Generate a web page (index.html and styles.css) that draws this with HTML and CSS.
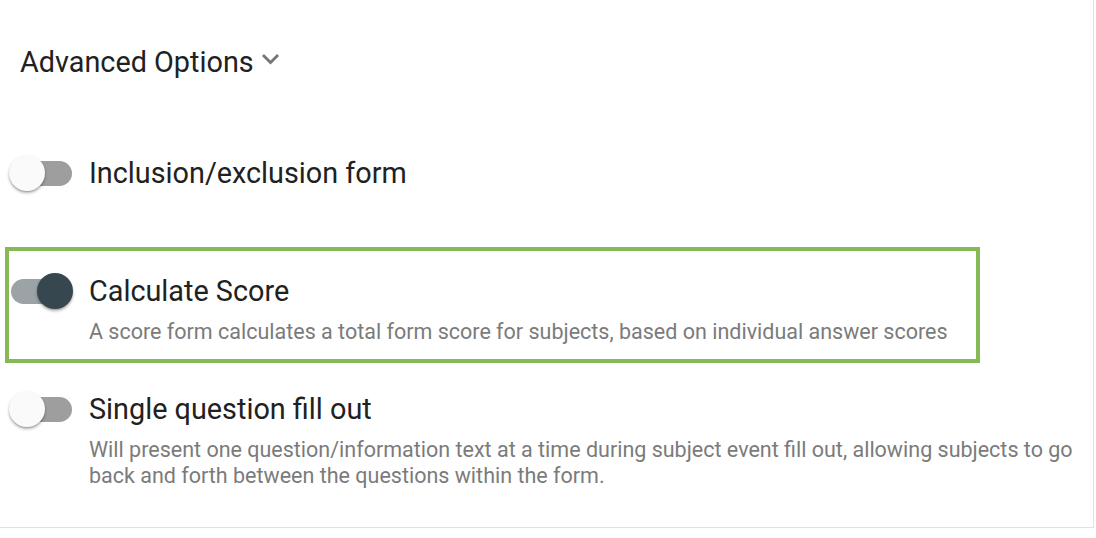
FILE: index.html
```html
<!DOCTYPE html>
<html>

<head>
  <title>Advanced Options</title>
  <link rel="stylesheet" href="styles.css">
</head>

<body>
  <div class="panel">
    <h3 class="panel-title">
      Advanced Options
      <svg class="chevron" viewBox="6 8.59 12 7.41" width="17" height="10.5">
        <path d="M16.59 8.59L12 13.17 7.41 8.59 6 10l6 6 6-6z" fill="#757575"/>
      </svg>
    </h3>

    <div class="option option-first">
      <span class="switch">
        <span class="switch-track"></span>
        <span class="switch-thumb"></span>
      </span>
      <div class="option-text">
        <div class="option-title">Inclusion/exclusion form</div>
      </div>
    </div>

    <div class="option option-highlight">
      <span class="switch switch-on">
        <span class="switch-track"></span>
        <span class="switch-thumb"></span>
      </span>
      <div class="option-text">
        <div class="option-title">Calculate Score</div>
        <div class="option-desc">A score form calculates a total form score for subjects, based on individual answer scores</div>
      </div>
    </div>

    <div class="option option-last">
      <span class="switch">
        <span class="switch-track"></span>
        <span class="switch-thumb"></span>
      </span>
      <div class="option-text">
        <div class="option-title">Single question fill out</div>
        <div class="option-desc">Will present one question/information text at a time during subject event fill out, allowing subjects to go back and forth between the questions within the form.</div>
      </div>
    </div>
  </div>
</body>

</html>
```

FILE: styles.css
```css
body {
  margin: 0;
  background-color: #ffffff;
  font-family: Roboto, "Noto Sans", sans-serif;
}

.panel {
  width: 1093px;
  height: 527px;
  border-right: 1px solid #e0e0e0;
  border-bottom: 1px solid #e0e0e0;
  overflow: hidden;
}

.panel-title {
  display: flex;
  align-items: center;
  gap: 8px;
  margin: 0;
  padding: 44px 0 0 20px;
  font-size: 28.8px;
  line-height: 36px;
  font-weight: 400;
  color: #212121;
}

.chevron {
  margin-top: -5px;
}

.option {
  display: flex;
  align-items: flex-start;
  padding-left: 9px;
}

.option-first {
  margin-top: 75px;
}

.option-highlight {
  width: 967px;
  margin-top: 56px;
  margin-left: 5px;
  padding: 22px 0 14px 0;
  border: 4px solid #86b856;
}

.option-last {
  margin-top: 28px;
}

.option-text {
  max-width: 990px;
  margin-left: 16px;
}

.option-title {
  font-size: 28.8px;
  line-height: 36px;
  color: #212121;
}

.option-desc {
  margin-top: 10px;
  font-size: 21.5px;
  line-height: 26px;
  color: #7b7b7b;
}

.switch {
  position: relative;
  flex: none;
  width: 64px;
  height: 36px;
}

.switch-track {
  position: absolute;
  top: 6px;
  left: 2px;
  width: 61px;
  height: 25px;
  border-radius: 13px;
  background-color: #9e9e9e;
}

.switch-thumb {
  position: absolute;
  top: 0;
  left: 0;
  width: 36px;
  height: 36px;
  border-radius: 50%;
  background-color: #fafafa;
  box-shadow: 0 2px 3px rgba(0, 0, 0, 0.3), 0 1px 1px rgba(0, 0, 0, 0.12);
}

.switch-on .switch-track {
  background-color: #9ca3a7;
}

.switch-on .switch-thumb {
  left: 28px;
  background-color: #37474f;
}
```
